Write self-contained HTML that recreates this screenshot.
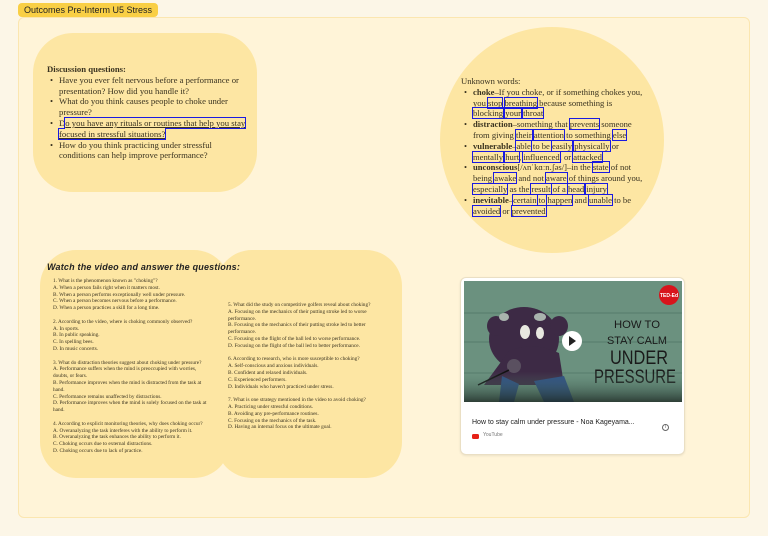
<!DOCTYPE html>
<html><head><meta charset="utf-8"><style>
*{margin:0;padding:0;box-sizing:border-box}
body{width:768px;height:536px;background:#fcf6e7;position:relative;overflow:hidden;font-family:"Liberation Serif",serif;color:#3a3320}
.tag{position:absolute;left:18px;top:3px;height:14px;padding:0 6px;background:#f9cf45;border-radius:4px;font:9px/14px "Liberation Sans",sans-serif;color:#222}
.frame{position:absolute;left:18px;top:17px;width:732px;height:501px;background:#fff4d8;border:1px solid #fbe6b0;border-radius:6px}
.y{background:#fde6a3;position:absolute}
ul{list-style:none}
li{position:relative;padding-left:12px}
li:before{content:"•";position:absolute;left:3px}
.b{outline:1px solid #1a1ae0}
.q{font-size:5.3px;line-height:6.8px;position:absolute;white-space:nowrap}
.q p{margin-bottom:6.8px}
</style></head><body>
<div class="tag">Outcomes Pre-Interm U5 Stress</div>
<div class="frame"></div>
<div class="y" style="left:33px;top:33px;width:224px;height:159px;border-radius:40px"></div>
<div style="position:absolute;left:47px;top:64px;width:200px;font-size:8.7px;line-height:10.8px">
<b>Discussion questions:</b>
<ul><li>Have you ever felt nervous before a performance or presentation? How did you handle it?</li>
<li>What do you think causes people to choke under pressure?</li>
<li>D<span class="b" style="text-decoration:underline">o you have any rituals or routines that help you stay focused in stressful situations?</span></li>
<li>How do you think practicing under stressful conditions can help improve performance?</li></ul></div>

<div class="y" style="left:440px;top:27px;width:224px;height:226px;border-radius:50%"></div>
<div style="position:absolute;left:461px;top:76px;width:182px;font-size:8.6px;line-height:10.8px">
Unknown words:
<ul><li><b>choke</b>–If you choke, or if something chokes you, you <span class="b">stop</span> <span class="b">breathing</span> because something is <span class="b">blocking</span> <span class="b">your</span> <span class="b">throat</span></li>
<li><b>distraction</b>–something that <span class="b">prevents</span> someone from giving <span class="b">their</span> <span class="b">attention</span> to something <span class="b">else</span></li>
<li><b>vulnerable</b>–<span class="b">able</span> to be <span class="b">easily</span> <span class="b">physically</span> or <span class="b">mentally</span> <span class="b">hurt</span>, <span class="b">influenced</span>, or <span class="b">attacked</span></li>
<li><b>unconscious</b>[/ʌnˈkɑːn.ʃəs/]–in the <span class="b">state</span> of not being <span class="b">awake</span> and not <span class="b">aware</span> of things around you, <span class="b">especially</span> as the <span class="b">result</span> of a <span class="b">head</span> <span class="b">injury</span></li>
<li><b>inevitable</b>–<span class="b">certain</span> to <span class="b">happen</span> and <span class="b">unable</span> to be <span class="b">avoided</span> or <span class="b">prevented</span></li></ul></div>

<div class="y" style="left:40px;top:250px;width:190px;height:228px;border-radius:36px"></div>
<div class="y" style="left:216px;top:250px;width:186px;height:228px;border-radius:36px"></div>
<div style="position:absolute;left:47px;top:262px;font:italic bold 9px 'Liberation Sans',sans-serif;letter-spacing:0.2px;color:#222">Watch the video and answer the questions:</div>
<div class="q" style="left:53px;top:278px">
<p>1. What is the phenomenon known as "choking"?<br>A. When a person fails right when it matters most.<br>B. When a person performs exceptionally well under pressure.<br>C. When a person becomes nervous before a performance.<br>D. When a person practices a skill for a long time.</p>
<p>2. According to the video, where is choking commonly observed?<br>A. In sports.<br>B. In public speaking.<br>C. In spelling bees.<br>D. In music concerts.</p>
<p>3. What do distraction theories suggest about choking under pressure?<br>A. Performance suffers when the mind is preoccupied with worries,<br>doubts, or fears.<br>B. Performance improves when the mind is distracted from the task at<br>hand.<br>C. Performance remains unaffected by distractions.<br>D. Performance improves when the mind is solely focused on the task at<br>hand.</p>
<p>4. According to explicit monitoring theories, why does choking occur?<br>A. Overanalyzing the task interferes with the ability to perform it.<br>B. Overanalyzing the task enhances the ability to perform it.<br>C. Choking occurs due to external distractions.<br>D. Choking occurs due to lack of practice.</p></div>
<div class="q" style="left:228px;top:302px">
<p>5. What did the study on competitive golfers reveal about choking?<br>A. Focusing on the mechanics of their putting stroke led to worse<br>performance.<br>B. Focusing on the mechanics of their putting stroke led to better<br>performance.<br>C. Focusing on the flight of the ball led to worse performance.<br>D. Focusing on the flight of the ball led to better performance.</p>
<p>6. According to research, who is more susceptible to choking?<br>A. Self-conscious and anxious individuals.<br>B. Confident and relaxed individuals.<br>C. Experienced performers.<br>D. Individuals who haven't practiced under stress.</p>
<p>7. What is one strategy mentioned in the video to avoid choking?<br>A. Practicing under stressful conditions.<br>B. Avoiding any pre-performance routines.<br>C. Focusing on the mechanics of the task.<br>D. Having an internal focus on the ultimate goal.</p></div>

<div style="position:absolute;left:460px;top:277px;width:225px;height:178px;background:#fff;border:1px solid #eadfc4;border-radius:6px;box-shadow:0 1px 2px rgba(0,0,0,.08)">
<svg style="position:absolute;left:3px;top:3px" width="218" height="121" viewBox="0 0 218 121">
<defs><linearGradient id="g" x1="0" y1="0" x2="0" y2="1"><stop offset="0.75" stop-color="#5f8a78" stop-opacity="0"/><stop offset="1" stop-color="#1e2a24" stop-opacity=".8"/></linearGradient></defs>
<rect width="218" height="121" fill="#6b917f"/>
<g stroke="#4f7464" stroke-width="0.7"><line x1="0" y1="32" x2="218" y2="32"/><line x1="0" y1="61" x2="218" y2="61"/><line x1="0" y1="92" x2="218" y2="92"/></g>
<ellipse cx="60" cy="58" rx="35" ry="32" fill="#3d2a45"/>
<ellipse cx="32" cy="45" rx="9" ry="10" fill="#3d2a45"/><ellipse cx="95" cy="45" rx="9" ry="10" fill="#3d2a45"/>
<path d="M45 70 Q70 60 95 72 L100 104 L20 104 Z" fill="#3d2a45"/>
<path d="M38 95 L55 103 L50 121 L35 121Z M70 100 L100 95 L110 121 L80 121Z" fill="#2e4f86"/>
<ellipse cx="76" cy="36" rx="6" ry="4" fill="#a9b3ae"/><ellipse cx="40" cy="36" rx="5" ry="4" fill="#a9b3ae"/>
<ellipse cx="61" cy="51" rx="5" ry="7" fill="#e8e8e0"/><ellipse cx="76" cy="52" rx="4" ry="6" fill="#e8e8e0"/>
<circle cx="50" cy="85" r="7" fill="#5a5060"/><line x1="45" y1="89" x2="14" y2="104" stroke="#111" stroke-width="1.5"/>
<text x="150" y="47" textLength="46" lengthAdjust="spacingAndGlyphs" font-family="Liberation Sans,sans-serif" font-size="11" fill="#1a1a1a">HOW TO</text>
<text x="143" y="63" textLength="60" lengthAdjust="spacingAndGlyphs" font-family="Liberation Sans,sans-serif" font-size="11" fill="#1a1a1a">STAY CALM</text>
<text x="146" y="83" textLength="58" lengthAdjust="spacingAndGlyphs" font-family="Liberation Sans,sans-serif" font-size="19" fill="#1a1a1a">UNDER</text>
<text x="130" y="102" textLength="82" lengthAdjust="spacingAndGlyphs" font-family="Liberation Sans,sans-serif" font-size="19" fill="#1a1a1a">PRESSURE</text>
<rect width="218" height="121" fill="url(#g)"/>
<circle cx="205" cy="14" r="10" fill="#d8141c"/><text x="205" y="16" font-family="Liberation Sans,sans-serif" font-size="5" font-weight="bold" fill="#fff" text-anchor="middle">TED-Ed</text>
<circle cx="108" cy="60" r="10" fill="#fff"/><path d="M105 55 L112 60 L105 65Z" fill="#222"/>
</svg>
<div style="position:absolute;left:11px;top:141px;font:7px 'Liberation Sans',sans-serif;color:#222">How to stay calm under pressure - Noa Kageyama...</div>
<div style="position:absolute;left:11px;top:156px;width:7px;height:5px;background:#e62117;border-radius:1.5px"></div>
<div style="position:absolute;left:22px;top:154px;font:5px 'Liberation Sans',sans-serif;color:#777">YouTube</div>
<div style="position:absolute;left:201px;top:146px;width:7px;height:7px;border:1px solid #666;border-radius:50%;font:5px/5px 'Liberation Sans',sans-serif;text-align:center;color:#666">i</div>
</div>
</body></html>
